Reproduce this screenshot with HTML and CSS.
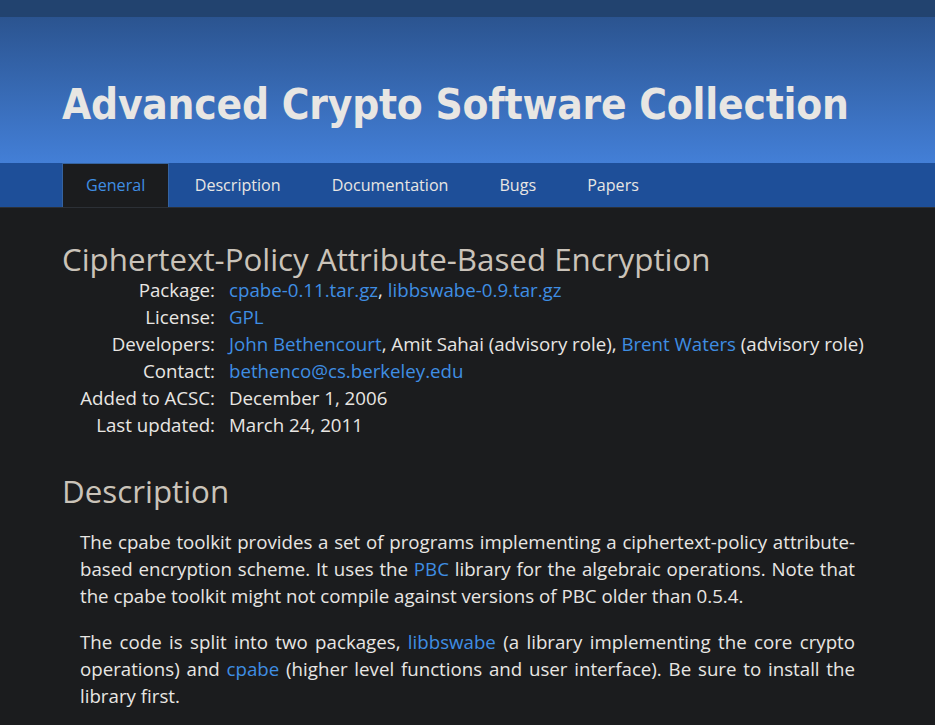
FILE: index.html
```html
<!DOCTYPE html>
<html lang="en">
<head>
<meta charset="utf-8">
<title>Advanced Crypto Software Collection</title>
<link rel="stylesheet" href="styles.css">
</head>
<body>
<div class="topbar"></div>
<header class="banner">
  <h1 class="site-title">Advanced Crypto Software Collection</h1>
</header>
<nav class="tabs">
  <a class="tab active" href="#">General</a>
  <a class="tab" href="#">Description</a>
  <a class="tab" href="#">Documentation</a>
  <a class="tab" href="#">Bugs</a>
  <a class="tab" href="#">Papers</a>
</nav>
<main class="content">
  <h2 class="section-title">Ciphertext-Policy Attribute-Based Encryption</h2>
  <div class="info">
    <div class="label">Package:</div>
    <div class="value"><a href="#">cpabe-0.11.tar.gz</a>, <a href="#">libbswabe-0.9.tar.gz</a></div>
    <div class="label">License:</div>
    <div class="value"><a href="#">GPL</a></div>
    <div class="label">Developers:</div>
    <div class="value"><a href="#">John Bethencourt</a>, Amit Sahai (advisory role), <a href="#">Brent Waters</a> (advisory role)</div>
    <div class="label">Contact:</div>
    <div class="value"><a href="#">bethenco@cs.berkeley.edu</a></div>
    <div class="label">Added to ACSC:</div>
    <div class="value">December 1, 2006</div>
    <div class="label">Last updated:</div>
    <div class="value">March 24, 2011</div>
  </div>
  <h2 class="section-title desc-title">Description</h2>
  <p class="para">The cpabe toolkit provides a set of programs implementing a ciphertext-policy attribute-based encryption scheme. It uses the <a href="#">PBC</a> library for the algebraic operations. Note that the cpabe toolkit might not compile against versions of PBC older than 0.5.4.</p>
  <p class="para">The code is split into two packages, <a href="#">libbswabe</a> (a library implementing the core crypto operations) and <a href="#">cpabe</a> (higher level functions and user interface). Be sure to install the library first.</p>
</main>
</body>
</html>
```
FILE: styles.css
```css
html, body {
  margin: 0;
  padding: 0;
  background: #1b1c1e;
}
body {
  font-family: "Open Sans", "Noto Sans", sans-serif;
  color: #e8e6e3;
  font-size: 18.7px;
  line-height: 27px;
}
a {
  color: #3f8ee3;
  text-decoration: none;
}
.topbar {
  height: 17px;
  background: #22436f;
}
.banner {
  height: 146px;
  background: linear-gradient(#2b5490, #437fd7);
  padding: 0 62px;
  display: flex;
  align-items: flex-end;
}
.site-title {
  margin: 0 0 33px 0;
  font-family: "DejaVu Sans Condensed", "DejaVu Sans", sans-serif;
  font-weight: bold;
  font-size: 42px;
  line-height: 50px;
  color: #e8e6e3;
  letter-spacing: -0.2px;
}
.tabs {
  height: 44px;
  background: #1e4f99;
  border-bottom: 1px solid #2c3036;
  display: flex;
  padding: 0 62px;
}
.tab {
  display: flex;
  align-items: center;
  padding: 0 25.5px;
  font-size: 16.1px;
  color: #e8e6e3;
}
.tab.active {
  background: #1b1c1e;
  color: #3f8ee3;
  border: 1px solid #3563a0;
  border-bottom: none;
  padding: 0 23px 0 23px;
}
.content {
  padding: 0 62px;
}
.section-title {
  margin: 0;
  font-weight: normal;
  font-size: 31.3px;
  line-height: 40px;
  color: #cac3b9;
}
.section-title:first-child {
  padding-top: 31px;
}
.info {
  display: grid;
  grid-template-columns: 153px auto;
  column-gap: 14px;
  margin-top: -3px;
}
.label {
  text-align: right;
}
.desc-title {
  margin-top: 33px;
  margin-bottom: 17px;
}
.para {
  margin: 0 18px 19px 18px;
  text-align: justify;
}
```
